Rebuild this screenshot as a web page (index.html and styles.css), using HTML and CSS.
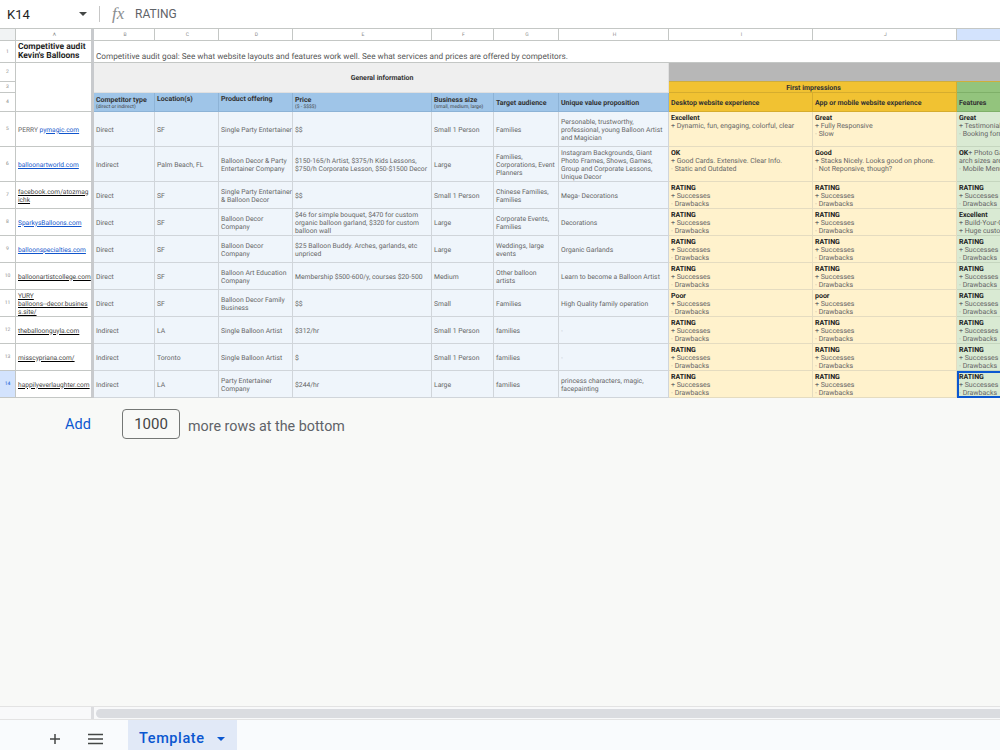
FILE: index.html
```html
<!DOCTYPE html>
<html lang="en">
<head>
<meta charset="utf-8">
<title>Competitive audit</title>
<link rel="stylesheet" href="styles.css">
</head>
<body>
<div class="app">
  <div class="formula">
    <span class="namebox">K14</span>
    <span class="tri"></span>
    <span class="sep"></span>
    <span class="fx">fx</span>
    <span class="ftext">RATING</span>
  </div>
  <div class="sheet">
    <table class="grid">
      <colgroup>
        <col class="c0"><col class="ca"><col class="cb"><col class="cc"><col class="cd"><col class="ce"><col class="cf"><col class="cg"><col class="ch"><col class="ci"><col class="cj"><col class="ck">
      </colgroup>
      <tr class="rh">
        <th class="corner"></th><th class="col froz">A</th><th class="col">B</th><th class="col">C</th><th class="col">D</th><th class="col">E</th><th class="col">F</th><th class="col">G</th><th class="col">H</th><th class="col">I</th><th class="col">J</th><th class="col sel">K</th>
      </tr>
      <tr class="r1">
        <th class="row">1</th>
        <td class="name froz">Competitive audit<br>Kevin's Balloons</td>
        <td class="goal" colspan="10">Competitive audit goal: See what website layouts and features work well. See what services and prices are offered by competitors.</td>
      </tr>
      <tr class="r2">
        <th class="row">2</th>
        <td class="blank froz" rowspan="3"></td>
        <td class="gen" colspan="7" rowspan="2">General information</td>
        <td class="dark" colspan="3"></td>
      </tr>
      <tr class="r3">
        <th class="row">3</th>
        <td class="ybar" colspan="2">First impressions</td>
        <td class="gbar"></td>
      </tr>
      <tr class="r4">
        <th class="row">4</th>
        <td class="hb">Competitor type<small>(direct or indirect)</small></td>
        <td class="hb top">Location(s)</td>
        <td class="hb top">Product offering</td>
        <td class="hb">Price<small>($ - $$$$)</small></td>
        <td class="hb">Business size<small>(small, medium, large)</small></td>
        <td class="hb">Target audience</td>
        <td class="hb">Unique value proposition</td>
        <td class="hy">Desktop website experience</td>
        <td class="hy">App or mobile website experience</td>
        <td class="hg">Features</td>
      </tr>
      <tr class="tall">
        <th class="row">5</th>
        <td class="link froz">PERRY <a class="blue" href="#">pymagic.com</a></td>
        <td class="d">Direct</td><td class="d">SF</td><td class="d">Single Party Entertainer</td><td class="d">$$</td><td class="d">Small 1 Person</td><td class="d">Families</td><td class="d">Personable, trustworthy, professional, young Balloon Artist and Magician</td>
        <td class="y"><b>Excellent</b><br>+ Dynamic, fun, engaging, colorful, clear</td>
        <td class="y"><b>Great</b><br>+ Fully Responsive<br><i class="m">-</i> Slow</td>
        <td class="g"><b>Great</b><br>+ Testimonials, Gallery<br><i class="m">-</i> Booking form</td>
      </tr>
      <tr class="tall">
        <th class="row">6</th>
        <td class="link froz"><a class="blue" href="#">balloonartworld.com</a></td>
        <td class="d">Indirect</td><td class="d">Palm Beach, FL</td><td class="d">Balloon Decor &amp; Party Entertainer Company</td><td class="d">$150-165/h Artist, $375/h Kids Lessons, $750/h Corporate Lesson, $50-$1500 Decor</td><td class="d">Large</td><td class="d">Families, Corporations, Event Planners</td><td class="d">Instagram Backgrounds, Giant Photo Frames, Shows, Games, Group and Corporate Lessons, Unique Decor</td>
        <td class="y"><b>OK</b><br>+ Good Cards. Extensive. Clear Info.<br><i class="m">-</i> Static and Outdated</td>
        <td class="y"><b>Good</b><br>+ Stacks Nicely. Looks good on phone.<br><i class="m">-</i> Not Reponsive, though?</td>
        <td class="g"><b>OK</b>+ Photo Gallery. Balloon<br>arch sizes are clear.<br><i class="m">-</i> Mobile Menu</td>
      </tr>
      <tr class="std">
        <th class="row">7</th>
        <td class="link froz"><a class="black" href="#">facebook.com/atozmag<br>ichk</a></td>
        <td class="d">Direct</td><td class="d">SF</td><td class="d">Single Party Entertainer &amp; Balloon Decor</td><td class="d">$$</td><td class="d">Small 1 Person</td><td class="d">Chinese Families, Families</td><td class="d">Mega- Decorations</td>
        <td class="y"><b>RATING</b><br>+ Successes<br><i class="m">-</i> Drawbacks</td><td class="y"><b>RATING</b><br>+ Successes<br><i class="m">-</i> Drawbacks</td><td class="g"><b>RATING</b><br>+ Successes<br><i class="m">-</i> Drawbacks</td>
      </tr>
      <tr class="std">
        <th class="row">8</th>
        <td class="link froz"><a class="blue" href="#">SparkysBalloons.com</a></td>
        <td class="d">Direct</td><td class="d">SF</td><td class="d">Balloon Decor Company</td><td class="d">$46 for simple bouquet, $470 for custom organic balloon garland, $320 for custom balloon wall</td><td class="d">Large</td><td class="d">Corporate Events, Families</td><td class="d">Decorations</td>
        <td class="y"><b>RATING</b><br>+ Successes<br><i class="m">-</i> Drawbacks</td><td class="y"><b>RATING</b><br>+ Successes<br><i class="m">-</i> Drawbacks</td><td class="g"><b>Excellent</b><br>+ Build-Your-Own<br>+ Huge custom</td>
      </tr>
      <tr class="std">
        <th class="row">9</th>
        <td class="link froz"><a class="blue" href="#">balloonspecialties.com</a></td>
        <td class="d">Direct</td><td class="d">SF</td><td class="d">Balloon Decor Company</td><td class="d">$25 Balloon Buddy. Arches, garlands, etc unpriced</td><td class="d">Large</td><td class="d">Weddings, large events</td><td class="d">Organic Garlands</td>
        <td class="y"><b>RATING</b><br>+ Successes<br><i class="m">-</i> Drawbacks</td><td class="y"><b>RATING</b><br>+ Successes<br><i class="m">-</i> Drawbacks</td><td class="g"><b>RATING</b><br>+ Successes<br><i class="m">-</i> Drawbacks</td>
      </tr>
      <tr class="std">
        <th class="row">10</th>
        <td class="link froz"><a class="black" href="#">balloonartistcollege.com</a></td>
        <td class="d">Direct</td><td class="d">SF</td><td class="d">Balloon Art Education Company</td><td class="d">Membership $500-600/y, courses $20-500</td><td class="d">Medium</td><td class="d">Other balloon<br>artists</td><td class="d">Learn to become a Balloon Artist</td>
        <td class="y"><b>RATING</b><br>+ Successes<br><i class="m">-</i> Drawbacks</td><td class="y"><b>RATING</b><br>+ Successes<br><i class="m">-</i> Drawbacks</td><td class="g"><b>RATING</b><br>+ Successes<br><i class="m">-</i> Drawbacks</td>
      </tr>
      <tr class="std">
        <th class="row">11</th>
        <td class="link froz"><a class="black" href="#">YURY<br>balloons--decor.busines<br>s.site/</a></td>
        <td class="d">Direct</td><td class="d">SF</td><td class="d">Balloon Decor Family Business</td><td class="d">$$</td><td class="d">Small</td><td class="d">Families</td><td class="d">High Quality family operation</td>
        <td class="y"><b>Poor</b><br>+ Successes<br><i class="m">-</i> Drawbacks</td><td class="y"><b>poor</b><br>+ Successes<br><i class="m">-</i> Drawbacks</td><td class="g"><b>RATING</b><br>+ Successes<br><i class="m">-</i> Drawbacks</td>
      </tr>
      <tr class="std">
        <th class="row">12</th>
        <td class="link froz"><a class="black" href="#">theballoonguyla.com</a></td>
        <td class="d">Indirect</td><td class="d">LA</td><td class="d">Single Balloon Artist</td><td class="d">$312/hr</td><td class="d">Small 1 Person</td><td class="d">families</td><td class="d"><i class="m">-</i></td>
        <td class="y"><b>RATING</b><br>+ Successes<br><i class="m">-</i> Drawbacks</td><td class="y"><b>RATING</b><br>+ Successes<br><i class="m">-</i> Drawbacks</td><td class="g"><b>RATING</b><br>+ Successes<br><i class="m">-</i> Drawbacks</td>
      </tr>
      <tr class="std">
        <th class="row">13</th>
        <td class="link froz"><a class="black" href="#">misscypriana.com/</a></td>
        <td class="d">Indirect</td><td class="d">Toronto</td><td class="d">Single Balloon Artist</td><td class="d">$</td><td class="d">Small 1 Person</td><td class="d">families</td><td class="d"><i class="m">-</i></td>
        <td class="y"><b>RATING</b><br>+ Successes<br><i class="m">-</i> Drawbacks</td><td class="y"><b>RATING</b><br>+ Successes<br><i class="m">-</i> Drawbacks</td><td class="g"><b>RATING</b><br>+ Successes<br><i class="m">-</i> Drawbacks</td>
      </tr>
      <tr class="std">
        <th class="row sel">14</th>
        <td class="link froz"><a class="black" href="#">happilyeverlaughter.com</a></td>
        <td class="d">Indirect</td><td class="d">LA</td><td class="d">Party Entertainer Company</td><td class="d">$244/hr</td><td class="d">Large</td><td class="d">families</td><td class="d">princess characters, magic, facepainting</td>
        <td class="y"><b>RATING</b><br>+ Successes<br><i class="m">-</i> Drawbacks</td><td class="y"><b>RATING</b><br>+ Successes<br><i class="m">-</i> Drawbacks</td><td class="g active"><b>RATING</b><br>+ Successes<br><i class="m">-</i> Drawbacks</td>
      </tr>
    </table>
    <div class="addrow">
      <span class="add">Add</span>
      <span class="count">1000</span>
      <span class="more">more rows at the bottom</span>
    </div>
  </div>
  <div class="scroll">
    <span class="sleft"></span>
    <span class="sfrz"></span>
    <span class="thumb"></span>
  </div>
  <div class="tabs">
    <svg class="plus" width="12" height="12" viewBox="0 0 12 12"><path d="M6 1v10M1 6h10" stroke="#444746" stroke-width="1.5" fill="none"/></svg>
    <svg class="menu" width="15" height="12" viewBox="0 0 15 12"><path d="M0 1.5h15M0 6h15M0 10.500h15" stroke="#444746" stroke-width="1.300" fill="none"/></svg>
    <div class="tab">Template<span class="tabtri"></span></div>
  </div>
</div>
</body>
</html>
```
FILE: styles.css
```css
* { box-sizing: border-box; }
html, body { margin: 0; padding: 0; }
body { font-family: Roboto, "Liberation Sans", sans-serif; background: #fff; }
.app { width: 1000px; height: 750px; display: flex; flex-direction: column; overflow: hidden; }

.formula { height: 29px; flex: none; display: flex; align-items: center; background: #fff; border-bottom: 1px solid #c4c7c5; }
.namebox { width: 72px; margin-left: 7px; font-size: 13px; color: #1f1f1f; }
.tri { width: 0; height: 0; border-left: 4px solid transparent; border-right: 4px solid transparent; border-top: 4px solid #444746; }
.sep { width: 1px; height: 16px; margin-left: 12px; background: #c7c7c7; }
.fx { width: 23px; margin-left: 12px; font: italic 17px "Liberation Serif", serif; color: #8a8d8f; }
.ftext { font-size: 12px; color: #5f6368; }

.sheet { flex: 1; min-height: 0; background: #f8f9f7; overflow: hidden; }
.grid { table-layout: fixed; width: 1101px; border-collapse: separate; border-spacing: 0; font-size: 7px; line-height: 8px; color: #666; background: #fff; text-rendering: geometricPrecision; }
.c0 { width: 16px; } .ca { width: 78px; } .cb { width: 61px; } .cc { width: 64px; } .cd { width: 74px; } .ce { width: 139px; } .cf { width: 62px; } .cg { width: 65px; } .ch { width: 110px; } .ci { width: 144px; } .cj { width: 144px; } .ck { width: 144px; }
.rh { height: 12px; } .r1 { height: 22px; } .r2 { height: 19px; } .r3 { height: 11px; } .r4 { height: 19px; } .tall { height: 35px; } .std { height: 27px; }
.grid td, .grid th { padding: 0 0 0 2px; overflow: hidden; border-right: 1px solid #d0d5da; border-bottom: 1px solid #d0d5da; }

.grid .corner { background: #f1f3f4; border-color: #c4c7c5; border-right-width: 1px; }
.grid .col { background: #fff; color: #888; font-size: 5px; font-weight: 400; text-align: center; border-color: #c4c7c5; }
.grid .row { background: #fff; color: #888; font-size: 5px; font-weight: 400; text-align: center; border-color: #c4c7c5; padding: 0; }
.grid .sel { background: #d3e3fd; color: #0b57d0; }
.grid .froz { border-right: 3px solid #c8cacd; border-bottom-color: #c4c7c5; }

.grid .name { color: #1f1f1f; font-weight: 700; font-size: 8.500px; line-height: 9px; vertical-align: top; padding-top: 2px; }
.grid .goal { color: #555; font-size: 8.200px; vertical-align: bottom; padding-bottom: 1px; border-right: 0; border-bottom-color: #c4c7c5; }
.grid .gen { background: #efefef; color: #333; font-weight: 700; text-align: center; border-color: #e0e0e0; }
.grid .dark { background: #b7b7b7; border-color: #b7b7b7; border-bottom-color: #cfae3c; }
.grid .ybar { background: #f1c232; color: #333; font-weight: 700; text-align: center; padding-top: 1px; border-color: #d6ad2e; }
.grid .gbar { background: #93c47d; border-color: #7fb069; }
.grid .hb, .grid .hy, .grid .hg { color: #333; font-weight: 700; padding-top: 2px; }
.grid .hb { background: #9fc5e8; border-color: #8db3d6; }
.grid .top { vertical-align: top; padding-top: 2px; }
.grid .hy { background: #f1c232; border-color: #d6ad2e; }
.grid .hg { background: #93c47d; border-color: #7fb069; }
.grid small { display: block; font-size: 5px; line-height: 6px; font-weight: 400; color: #444; }

.grid .link { background: #fff; white-space: nowrap; font-size: 6.600px; padding-top: 1px; }
.blue { color: #1155cc; text-decoration: underline; }
.black { color: #444; text-decoration: underline; text-decoration-color: #000; }
.grid .d { background: #eff5fb; padding-top: 1px; font-size: 6.800px; }
.grid .y, .grid .g { vertical-align: top; padding-top: 2px; white-space: nowrap; }
.grid .y { background: #fff2cc; border-color: #e5dcc0; }
.grid .g { background: #d9ead3; border-color: #c5d6bf; border-right: 0; }
.y b, .g b { color: #222; }
.m { font-style: normal; opacity: .35; }
.grid .active { outline: 2px solid #0b57d0; outline-offset: -2px; }

.addrow { display: flex; align-items: center; margin-top: 11px; padding-left: 65px; }
.add { width: 57px; color: #0b57d0; font-size: 14.500px; }
.count { width: 58px; height: 30px; display: flex; align-items: center; justify-content: center; border: 1px solid #747775; border-radius: 4px; color: #444; font-size: 15px; }
.more { margin-left: 8px; margin-top: 3px; color: #5f6368; font-size: 14.300px; }

.scroll { height: 14px; flex: none; display: flex; align-items: center; background: #f8f9fa; border-top: 1px solid #e3e3e3; border-bottom: 1px solid #e3e3e3; }
.sleft { width: 91px; }
.sfrz { width: 3px; height: 100%; background: #dcdde0; }
.thumb { flex: 1; height: 9px; margin-left: 2px; border-radius: 5px 0 0 5px; background: #dadce0; }

.tabs { height: 30px; flex: none; display: flex; align-items: center; background: #f9fbfd; padding-top: 7px; }
.plus { margin-left: 49px; }
.menu { margin-left: 27px; }
.tab { height: 30px; width: 109px; margin: -7px 0 0 25px; padding: 7px 0 0 11px; display: flex; align-items: center; background: #e1e9f7; color: #0b57d0; font-size: 14.500px; font-weight: 500; letter-spacing: .6px; }
.tabtri { width: 0; height: 0; margin-left: 12px; border-left: 4px solid transparent; border-right: 4px solid transparent; border-top: 4px solid #0b57d0; }
```
